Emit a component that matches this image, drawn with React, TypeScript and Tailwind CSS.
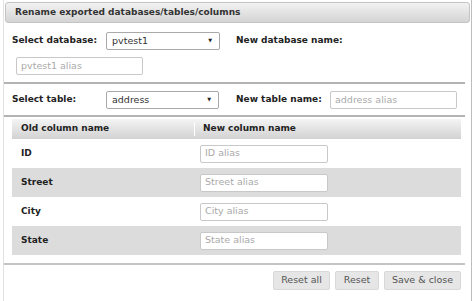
const rows = [
  { name: "ID", alias: "ID alias", shaded: false },
  { name: "Street", alias: "Street alias", shaded: true },
  { name: "City", alias: "City alias", shaded: false },
  { name: "State", alias: "State alias", shaded: true },
]

const Select = ({ value, width }: { value: string; width: string }) => (
  <div
    className={`${width} h-[18px] flex items-center justify-between pl-[5px] pr-[7px] border border-[#a9a9a9] rounded-[2px] bg-white text-[#333] font-normal text-[9.5px]`}
  >
    <span>{value}</span>
    <span className="text-[5px] text-[#222]">▼</span>
  </div>
)

const Field = ({ placeholder, width }: { placeholder: string; width: string }) => (
  <div
    className={`${width} h-[18px] flex items-center pl-[4px] border border-[#c8c8c8] rounded-[2px] bg-white text-[#aaa] font-normal text-[9.5px]`}
  >
    {placeholder}
  </div>
)

const Button = ({ label, width }: { label: string; width: string }) => (
  <div
    className={`${width} h-[19px] flex items-center justify-center bg-[#e6e6e6] border border-[#d8d8d8] rounded-[2px] text-[#555] text-[9.5px]`}
  >
    {label}
  </div>
)

export default function App() {
  return (
    <div
      className="w-[474px] h-[301px] bg-white overflow-hidden text-[9px] text-[#222] whitespace-nowrap"
      style={{ fontFamily: '"DejaVu Sans", Verdana, sans-serif' }}
    >
      <div className="ml-[3px] w-[469px] h-full border-l border-r border-l-[#e2e2e2] border-r-[#bdbdbd] flex flex-col">
        <div className="mt-[2px] mx-[1px] h-[21px] flex items-center pl-[9px] rounded-[3px] border border-[#c4c4c4] bg-gradient-to-b from-[#f2f2f2] to-[#d4d4d4] font-bold text-[#333]">
          Rename exported databases/tables/columns
        </div>

        <div className="flex items-center mt-[9px] pl-[8px] h-[18px]">
          <span className="w-[94px] font-bold">Select database:</span>
          <Select value="pvtest1" width="w-[114px]" />
          <span className="ml-[16px] font-bold">New database name:</span>
        </div>
        <div className="mt-[7px] pl-[12px]">
          <Field placeholder="pvtest1 alias" width="w-[127px]" />
        </div>

        <div className="mt-[7px] mr-[6px] border-t-2 border-[#b4b4b4]" />

        <div className="flex items-center mt-[7px] pl-[8px] h-[18px]">
          <span className="w-[94px] font-bold">Select table:</span>
          <Select value="address" width="w-[113px]" />
          <span className="ml-[17px] w-[94px] font-bold">New table name:</span>
          <Field placeholder="address alias" width="w-[127px]" />
        </div>

        <div className="mt-[6px] mr-[6px] border-t-2 border-[#b4b4b4]" />

        <div className="mt-[2px] ml-[8px] w-[449px] flex flex-col">
          <div className="h-[20px] flex items-center font-bold bg-gradient-to-b from-[#f4f4f4] to-[#d2d2d2]">
            <span className="w-[183px] pl-[9px] border-r border-white">Old column name</span>
            <span className="pl-[8px]">New column name</span>
          </div>
          {rows.map((r) => (
            <div
              key={r.name}
              className={`h-[29px] flex items-center font-bold ${r.shaded ? "bg-[#dcdcdc]" : "bg-white"}`}
            >
              <span className="w-[188px] pl-[9px]">{r.name}</span>
              <Field placeholder={r.alias} width="w-[128px]" />
            </div>
          ))}
        </div>

        <div className="mt-[8px] mr-[6px] border-t-2 border-[#c4c4c4]" />

        <div className="mt-[6px] flex justify-end gap-[5px] pr-[10px]">
          <Button label="Reset all" width="w-[57px]" />
          <Button label="Reset" width="w-[44px]" />
          <Button label="Save & close" width="w-[77px]" />
        </div>
      </div>
    </div>
  )
}
